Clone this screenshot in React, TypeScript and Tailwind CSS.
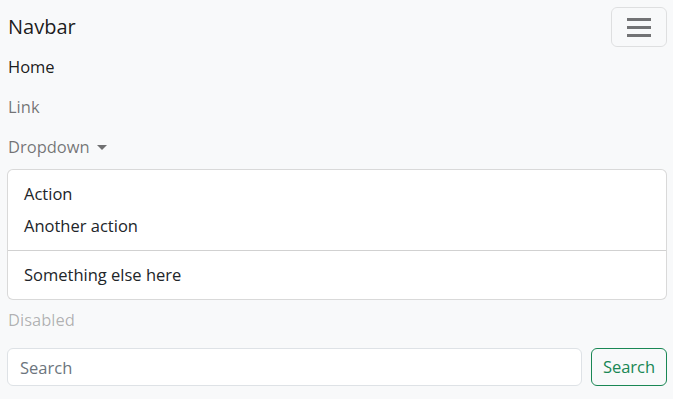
import React from 'react';

const font = { fontFamily: '"Open Sans", "Noto Sans", sans-serif' };

const App = () => {
  return (
    <div className="w-[673px] h-[399px] bg-[#f8f9fa] overflow-hidden" style={font}>
      <nav className="pl-[7px] pr-[6px] pt-[7px]">
        {/* Brand + toggler */}
        <div className="flex items-center justify-between h-[40px]">
          <a className="text-[20px] leading-[30px] text-[rgba(0,0,0,0.9)] pl-px">Navbar</a>
          <button className="w-[56px] h-[40px] border border-[rgba(0,0,0,0.1)] rounded-[6px] flex flex-col items-center justify-center gap-[5px]">
            <span className="block w-[24px] h-[3px] bg-[#727375]" />
            <span className="block w-[24px] h-[3px] bg-[#727375]" />
            <span className="block w-[24px] h-[3px] bg-[#727375]" />
          </button>
        </div>

        {/* Nav links */}
        <ul className="flex flex-col text-[16.5px] leading-[24px]">
          <li className="py-2 pl-px text-[rgba(0,0,0,0.9)]">Home</li>
          <li className="py-2 pl-px text-[rgba(0,0,0,0.55)]">Link</li>
          <li className="py-2 pl-px text-[rgba(0,0,0,0.55)] flex items-center">
            Dropdown
            <span className="ml-[7px] w-0 h-0 border-l-[5px] border-r-[5px] border-t-[5px] border-l-transparent border-r-transparent border-t-[rgba(0,0,0,0.55)]" />
          </li>
          <li className="mt-[2px]">
            <div className="bg-white border border-[rgba(0,0,0,0.15)] rounded-[6px] py-2 text-[#212529]">
              <div className="px-4 py-1">Action</div>
              <div className="px-4 py-1">Another action</div>
              <div className="my-2 border-t border-[rgba(0,0,0,0.18)]" />
              <div className="px-4 py-1">Something else here</div>
            </div>
          </li>
          <li className="py-2 pl-px text-[rgba(0,0,0,0.3)]">Disabled</li>
        </ul>

        {/* Search form */}
        <form className="flex mt-2 gap-[9px]">
          <input
            type="search"
            placeholder="Search"
            className="flex-1 h-[38px] bg-white border border-[#dee2e6] rounded-[6px] px-3 text-[16.5px] text-[#212529] placeholder:text-[#6c757d] outline-none"
            style={font}
          />
          <button
            type="button"
            className="h-[38px] w-[76px] border border-[#198754] rounded-[6px] text-[#198754] text-[16.5px]"
            style={font}
          >
            Search
          </button>
        </form>
      </nav>
    </div>
  );
};

export default App;
